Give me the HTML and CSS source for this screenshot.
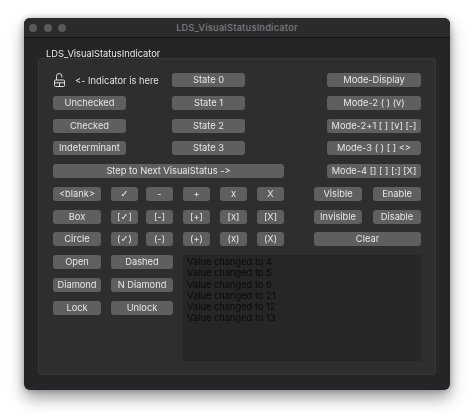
FILE: index.html
```html
<!DOCTYPE html>
<html lang="en">
<head>
<meta charset="utf-8">
<title>LDS_VisualStatusIndicator</title>
<link rel="stylesheet" href="styles.css">
</head>
<body>
<main class="window">
  <header class="titlebar">
    <div class="lights"><span class="light"></span><span class="light"></span><span class="light"></span></div>
    <div class="title">LDS_VisualStatusIndicator</div>
  </header>
  <div class="content">
    <div class="group-title">LDS_VisualStatusIndicator</div>
    <section class="group">
      <div class="row">
        <div class="indicator">
          <svg class="lock" viewBox="0 0 11 14" width="11" height="14" fill="none" stroke="#dcdcdc" stroke-width="1">
            <path d="M2.5 7V3.2a2.7 2.7 0 0 1 5.4 0V4.6"/>
            <rect x=".5" y="7" width="10" height="6.5" rx="1"/>
            <path d="M.5 9.8h10M5.5 9.8v3.7"/>
          </svg>
          <span>&lt;- Indicator is here</span>
        </div>
        <button class="btn w73">State 0</button>
        <button class="btn w94 ml-c">Mode-Display</button>
      </div>
      <div class="row">
        <button class="btn w73">Unchecked</button>
        <button class="btn w73 ml-a">State 1</button>
        <button class="btn w94 ml-c">Mode-2 ( ) (v)</button>
      </div>
      <div class="row">
        <button class="btn w73">Checked</button>
        <button class="btn w73 ml-a">State 2</button>
        <button class="btn w94 ml-c">Mode-2+1 [ ] [v] [-]</button>
      </div>
      <div class="row">
        <button class="btn w73">Indeterminant</button>
        <button class="btn w73 ml-a">State 3</button>
        <button class="btn w94 ml-c">Mode-3 ( ) [ ] &lt;&gt;</button>
      </div>
      <div class="row">
        <button class="btn w231">Step to Next VisualStatus -&gt;</button>
        <button class="btn w94 ml-d">Mode-4 [] [ ] [:] [X]</button>
      </div>
      <div class="row symbols">
        <button class="btn w48">&lt;blank&gt;</button>
        <button class="btn w27"><span class="tick">✓</span></button>
        <button class="btn w27">-</button>
        <button class="btn w27">+</button>
        <button class="btn w27">x</button>
        <button class="btn w27">X</button>
        <button class="btn w48">Visible</button>
        <button class="btn w48">Enable</button>
      </div>
      <div class="row symbols">
        <button class="btn w48">Box</button>
        <button class="btn w27">[<span class="tick">✓</span>]</button>
        <button class="btn w27">[-]</button>
        <button class="btn w27">[+]</button>
        <button class="btn w27">[x]</button>
        <button class="btn w27">[X]</button>
        <button class="btn w48">Invisible</button>
        <button class="btn w48">Disable</button>
      </div>
      <div class="row symbols">
        <button class="btn w48">Circle</button>
        <button class="btn w27">(<span class="tick">✓</span>)</button>
        <button class="btn w27">(-)</button>
        <button class="btn w27">(+)</button>
        <button class="btn w27">(x)</button>
        <button class="btn w27">(X)</button>
        <button class="btn w107">Clear</button>
      </div>
      <div class="bottom">
        <div class="bottom-left">
          <div class="pair"><button class="btn w48">Open</button><button class="btn w62">Dashed</button></div>
          <div class="pair"><button class="btn w48">Diamond</button><button class="btn w62">N Diamond</button></div>
          <div class="pair"><button class="btn w48">Lock</button><button class="btn w62">Unlock</button></div>
        </div>
        <div class="log">
          <div>Value changed to 4</div>
          <div>Value changed to 5</div>
          <div>Value changed to 6</div>
          <div>Value changed to 21</div>
          <div>Value changed to 12</div>
          <div>Value changed to 13</div>
        </div>
      </div>
    </section>
  </div>
</main>
</body>
</html>
```
FILE: styles.css
```css
* { box-sizing: border-box; }
html, body { margin: 0; height: 100%; background: #fff; }
body {
  width: 474px;
  height: 420px;
  padding: 18px 24px 30px;
  overflow: hidden;
  font-family: Inter, "Liberation Sans", Arial, sans-serif;
  font-size: 9.3px;
  font-variant-ligatures: none;
  font-feature-settings: "calt" 0, "liga" 0;
}
.window {
  width: 426px;
  height: 372px;
  background: #252527;
  border-radius: 6px;
  box-shadow: 0 8px 16px rgba(0, 0, 0, .38), 0 0 6px rgba(0, 0, 0, .25);
  filter: blur(.35px);
  overflow: hidden;
}
.titlebar {
  position: relative;
  height: 20px;
  background: #2b2b2d;
  border-bottom: 1px solid #161617;
  display: flex;
  align-items: center;
  justify-content: center;
}
.lights { position: absolute; left: 5px; top: 6px; display: flex; gap: 6.5px; }
.light { width: 8px; height: 8px; border-radius: 50%; background: #59595b; }
.title { color: #727274; font-weight: 600; font-size: 9.2px; letter-spacing: .2px; }
.content { padding: 10px 14px 0; }
.group-title { color: #e8e8e8; font-size: 9.3px; height: 10px; line-height: 11px; margin: 0 0 0 8px; }
.group {
  height: 317px;
  padding: 14px 14px 0;
  background: #2e2e30;
  border: 1px solid #38383a;
  border-radius: 3px;
}
.row { display: flex; height: 14px; margin-bottom: 8.75px; }
.btn {
  display: block;
  height: 14px;
  padding: 0;
  border: 0;
  border-radius: 3px;
  background: #5f5f61;
  color: #e6e6e6;
  font: 9.3px/14px Inter, "Liberation Sans", Arial, sans-serif;
  font-variant-ligatures: none;
  font-feature-settings: "calt" 0, "liga" 0;
  white-space: nowrap;
  text-align: center;
}
.tick { font-family: "DejaVu Sans", sans-serif; font-size: 9.5px; }
.w27 { width: 27px; }
.w48 { width: 48px; }
.w62 { width: 62px; }
.w73 { width: 73px; }
.w94 { width: 94px; }
.w107 { width: 107px; }
.w231 { width: 231px; }
.ml-a { margin-left: 46px; }
.ml-c { margin-left: 82px; }
.ml-d { margin-left: 43px; }
.symbols .w27 { margin-left: 10px; }
.symbols .w27:nth-child(3) { margin-left: 8px; }
.symbols .w27 + .w48, .symbols .w27 + .w107 { margin-left: 30px; }
.symbols .w48 + .w48 { margin-left: 11px; }
.indicator {
  width: 119px;
  height: 14px;
  display: flex;
  align-items: center;
  color: #e0e0e0;
  font-size: 9.3px;
}
.lock { margin: 0 10px 0 1px; flex: none; }
.bottom { display: flex; }
.bottom-left { width: 130px; }
.pair { display: flex; gap: 10px; height: 14px; margin-bottom: 8.75px; }
.log {
  width: 238px;
  height: 106px;
  padding: 1px 4px;
  background: #262628;
  color: #0a0a0a;
  font-size: 9.3px;
  line-height: 11.3px;
}
```
